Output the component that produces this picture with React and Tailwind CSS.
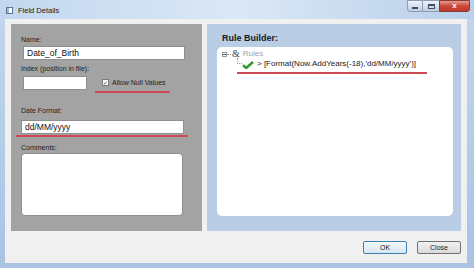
import React from "react";

const label = "block text-[7px] leading-[8px] text-[#1e1e1e]";
const box = "bg-white border border-[#8e8f8f] h-[14px]";

export default function App() {
  return (
    <div className="w-[474px] h-[268px] flex flex-col bg-gradient-to-b from-[#c3d7ee] to-[#a9c3e2] font-['Liberation_Sans',Arial,sans-serif] overflow-hidden">
      {/* title bar */}
      <div className="h-[19px] flex items-start bg-gradient-to-r from-[#c2d7ef] via-[#dbe8f6] to-[#b9cfea]">
        <div className="ml-[6px] mt-[7px] w-[7px] h-[7px] border border-[#5c7795] bg-white flex">
          <div className="w-[2px] h-full bg-[#9cb6d6]" />
        </div>
        <span className="ml-[5px] mt-[7px] text-[7.5px] leading-[8px] text-[#1b1b1b]">Field Details</span>
        <div className="ml-auto mr-[4px] flex h-[12px]">
          <div className="w-[16px] h-full rounded-bl-[3px] border border-[#8a9cb3] bg-gradient-to-b from-[#eef3f9] to-[#bfcde0] flex items-center justify-center">
            <div className="w-[6px] h-[2px] bg-[#3f4e62] mt-[3px]" />
          </div>
          <div className="w-[16px] h-full border-y border-[#8a9cb3] bg-gradient-to-b from-[#eef3f9] to-[#bfcde0] flex items-center justify-center">
            <div className="w-[7px] h-[5px] border border-[#3f4e62] border-t-2" />
          </div>
          <div className="w-[31px] h-full rounded-br-[3px] border border-[#8b3a33] bg-gradient-to-b from-[#e39a8f] via-[#c9483c] to-[#c1372b] flex items-center justify-center text-white text-[8px] font-bold leading-none">
            x
          </div>
        </div>
      </div>

      {/* client */}
      <div className="ml-[5px] mr-[7px] h-[244px] bg-[#f0f0f0] flex flex-col">
        <div className="flex gap-[5px] pt-[5px] pl-[6px]">
          {/* left panel */}
          <div className="w-[191px] h-[207px] bg-[#a3a3a3] pt-[12px] pl-[10px]">
            <span className={label}>Name:</span>
            <div className={`${box} mt-[2px] ml-[2px] w-[162px] text-[8.5px] leading-[12px] pl-[3px] text-[#111]`}>Date_of_Birth</div>
            <span className={`${label} mt-[5px]`}>Index (position in file):</span>
            <div className="flex mt-[3px]">
              <div className={`${box} ml-[2px] w-[64px]`} />
              <div className="ml-[8px] w-[75px] h-[17px] border-b-2 border-[#cf4a55] flex items-start pt-[3px] pl-[7px]">
                <div className="w-[7px] h-[7px] bg-white border border-[#7a7a7a] flex items-center justify-center text-[6px] leading-none text-[#2a3b6b]">✓</div>
                <span className="ml-[3px] text-[7px] leading-[8px] text-[#1e1e1e]">Allow Null Values</span>
              </div>
            </div>
            <span className={`${label} mt-[14px]`}>Date Format:</span>
            <div className={`${box} mt-[5px] w-[163px] text-[8.5px] leading-[12px] pl-[3px] text-[#111]`}>dd/MM/yyyy</div>
            <div className="ml-[-5px] mt-[1px] w-[172px] h-[2px] bg-[#cf4a55]" />
            <span className={`${label} mt-[7px]`}>Comments:</span>
            <div className="mt-[1px] w-[162px] h-[63px] bg-white rounded-[4px] border border-[#8e8f8f]" />
          </div>

          {/* right panel */}
          <div className="w-[254px] h-[207px] bg-[#b9cde5] pt-[9px]">
            <div className="pl-[15px] text-[9px] leading-[10px] font-bold text-[#1a1a1a]">Rule Builder:</div>
            <div className="ml-[10px] mt-[4px] w-[236px] h-[169px] bg-white rounded-[5px] pt-[2px] pl-[5px]">
              <div className="flex items-center h-[10px]">
                <div className="w-[5px] h-[5px] border border-[#9a9a9a] flex items-center justify-center">
                  <div className="w-[3px] h-px bg-[#555]" />
                </div>
                <div className="w-[4px] border-t border-dotted border-[#9a9a9a]" />
                <span className="text-[10px] leading-[10px] font-['Liberation_Serif',serif] text-[#444] ml-px">&amp;</span>
                <span className="ml-[3px] text-[8px] leading-[10px] text-[#a2a2a2]">Rules</span>
              </div>
              <div className="flex items-start h-[10px] ml-[15px]">
                <div className="w-[5px] h-[6px] border-l border-b border-dotted border-[#9a9a9a] mt-[-1px]" />
                <svg width="12" height="8" viewBox="0 0 12 8" className="mt-[2px]">
                  <path d="M1 4.2 L4.2 7 L11 1" fill="none" stroke="#2d9a2d" strokeWidth="2.4" strokeLinejoin="round" />
                </svg>
                <span className="ml-[3px] text-[8px] leading-[10px] text-[#1a1a1a] whitespace-nowrap">&gt; [Format(Now.AddYears(-18),'dd/MM/yyyy')]</span>
              </div>
              <div className="ml-[15px] mt-[3px] w-[190px] h-[2px] bg-[#cf4a55]" />
            </div>
          </div>
        </div>

        {/* buttons */}
        <div className="flex justify-end gap-[10px] pr-[6px] pt-[10px]">
          <button className="w-[44px] h-[13px] rounded-[2px] border border-[#3c7fb1] bg-gradient-to-b from-[#f4f9fd] to-[#d6e6f2] text-[7px] leading-none text-[#1a1a1a]">OK</button>
          <button className="w-[44px] h-[13px] rounded-[2px] border border-[#707070] bg-gradient-to-b from-[#f2f2f2] to-[#dadada] text-[7px] leading-none text-[#1a1a1a]">Close</button>
        </div>
      </div>
    </div>
  );
}
